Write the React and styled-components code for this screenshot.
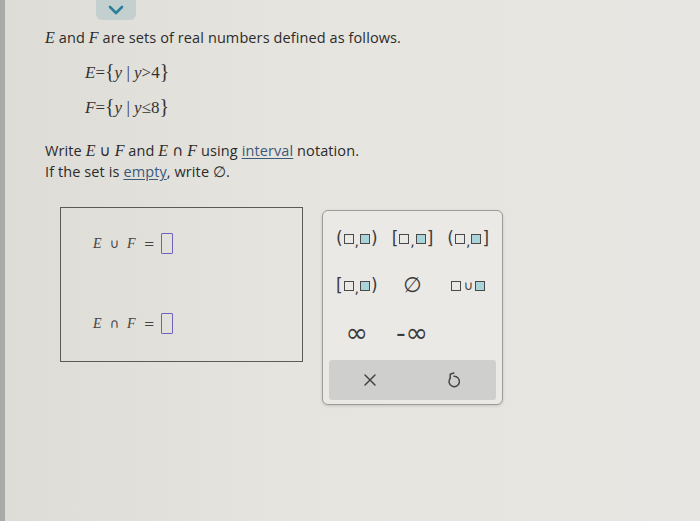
import React from 'react';
import styled, { createGlobalStyle } from 'styled-components';

const GlobalStyle = createGlobalStyle`
  html, body {
    margin: 0;
    padding: 0;
    background: #e3e1dc;
  }
  body {
    font-family: 'Open Sans', 'Liberation Sans', sans-serif;
    color: #2b2b2b;
  }
`;

const Page = styled.div`
  width: 700px;
  height: 521px;
  box-sizing: border-box;
  border-left: 5px solid #a9aba8;
  padding-left: 40px;
  background: linear-gradient(90deg, #dedcd6 0%, #e6e4df 40%, #e8e6e2 100%);
  overflow: hidden;
`;

const Tab = styled.div`
  margin-left: 51px;
  width: 40px;
  height: 20px;
  background: #c4cfcf;
  border-radius: 0 0 6px 6px;
  display: flex;
  align-items: center;
  justify-content: center;
`;

const Para = styled.p`
  margin: ${(p) => p.$mt || 0}px 0 0;
  font-size: 14.5px;
  line-height: 20px;
  height: 20px;
  letter-spacing: 0.1px;
`;

const Var = styled.span`
  font-family: 'Liberation Serif', serif;
  font-style: italic;
  font-size: 16px;
`;

const Op = styled.span`
  font-family: 'DejaVu Sans', sans-serif;
  font-size: 15px;
  margin: 0 4px;
`;

const Eq = styled.div`
  margin: ${(p) => p.$mt}px 0 0 40px;
  font-family: 'Liberation Serif', serif;
  font-size: 17px;
  line-height: 22px;
  height: 22px;
  color: #333;
`;

const Brace = styled.span`
  font-size: 20px;
  line-height: 1;
`;

const Link = styled.span`
  color: #3b5a7a;
  text-decoration: underline;
  text-underline-offset: 2px;
`;

const Row = styled.div`
  display: flex;
  align-items: flex-start;
  margin: 25px 0 0 15px;
`;

const AnswerBox = styled.div`
  width: 243px;
  height: 155px;
  box-sizing: border-box;
  border: 1.5px solid #5a5a58;
  padding: 25px 0 0 32px;
  display: flex;
  flex-direction: column;
  gap: 59px;
`;

const AnswerLine = styled.div`
  display: flex;
  align-items: center;
  font-family: 'Liberation Serif', serif;
  font-size: 14px;
  color: #444;
`;

const Sym = styled.span`
  font-family: ${(p) => (p.$it ? "'Liberation Serif', serif" : "'DejaVu Sans', sans-serif")};
  font-style: ${(p) => (p.$it ? 'italic' : 'normal')};
  font-size: ${(p) => (p.$it ? 14 : 13)}px;
  margin-left: ${(p) => p.$ml || 0}px;
`;

const Slot = styled.span`
  display: inline-block;
  width: 10px;
  height: 19px;
  border: 1.5px solid #6e63b8;
  border-radius: 1px;
  margin-left: 6px;
`;

const Panel = styled.div`
  margin: 3px 0 0 19px;
  width: 181px;
  height: 195px;
  box-sizing: border-box;
  border: 1.5px solid #9c9c9a;
  border-radius: 6px;
  background: #eae9e6;
  box-shadow: 0 1px 3px rgba(0, 0, 0, 0.15);
  padding: 4px 6px 0;
  display: flex;
  flex-direction: column;
`;

const Grid = styled.div`
  display: grid;
  grid-template-columns: repeat(3, 1fr);
  grid-auto-rows: 47px;
  align-items: center;
  justify-items: center;
  height: 141px;
`;

const Key = styled.div`
  font-family: 'DejaVu Sans', sans-serif;
  font-size: ${(p) => p.$size || 17}px;
  color: #3d3d3d;
  display: flex;
  align-items: center;
  line-height: 1;
  margin-left: ${(p) => p.$shift || 0}px;
`;

const Sq = styled.span`
  display: inline-block;
  width: 8px;
  height: 8px;
  border: 1.4px solid #4a4a4a;
  background: ${(p) => (p.$fill ? '#a8d4da' : 'transparent')};
  margin: 0 1px;
`;

const Comma = styled.span`
  font-size: 14px;
  margin: 4px 0 0;
`;

const Small = styled.span`
  font-size: 13px;
  margin: 0 1px;
`;

const Bar = styled.div`
  margin-top: 4px;
  height: 40px;
  background: #cfcfcd;
  border-radius: 3px;
  display: flex;
  align-items: center;
  justify-content: space-between;
  padding: 0 34px;
`;

const interval = (l, r) => (
  <Key>
    {l}
    <Sq />
    <Comma>,</Comma>
    <Sq $fill />
    {r}
  </Key>
);

const answer = (op) => (
  <AnswerLine>
    <Sym $it>E</Sym>
    <Sym $ml={8}>{op}</Sym>
    <Sym $it $ml={8}>F</Sym>
    <Sym $ml={8}>=</Sym>
    <Slot />
  </AnswerLine>
);

export default function App() {
  return (
    <Page>
      <GlobalStyle />
      <Tab>
        <svg width="16" height="10" viewBox="0 0 16 10">
          <path d="M2 2 L8 8 L14 2" fill="none" stroke="#2a8197" strokeWidth="2.6" strokeLinecap="round" strokeLinejoin="round" />
        </svg>
      </Tab>
      <Para $mt={8}>
        <Var>E</Var> and <Var>F</Var> are sets of real numbers defined as follows.
      </Para>
      <Eq $mt={13}>
        <i>E</i>=<Brace>{'{'}</Brace><i>y</i> | <i>y</i>&gt;4<Brace>{'}'}</Brace>
      </Eq>
      <Eq $mt={13}>
        <i>F</i>=<Brace>{'{'}</Brace><i>y</i> | <i>y</i>≤8<Brace>{'}'}</Brace>
      </Eq>
      <Para $mt={23}>
        Write <Var>E</Var>
        <Op>∪</Op>
        <Var>F</Var> and <Var>E</Var>
        <Op>∩</Op>
        <Var>F</Var> using <Link>interval</Link> notation.
      </Para>
      <Para $mt={1}>
        If the set is <Link>empty</Link>, write ∅.
      </Para>
      <Row>
        <AnswerBox>
          {answer('∪')}
          {answer('∩')}
        </AnswerBox>
        <Panel>
          <Grid>
            {interval('(', ')')}
            {interval('[', ']')}
            {interval('(', ']')}
            {interval('[', ')')}
            <Key $size={21}>∅</Key>
            <Key>
              <Sq />
              <Small>∪</Small>
              <Sq $fill />
            </Key>
            <Key $size={27}>∞</Key>
            <Key $size={27} $shift={-1}>-∞</Key>
            <span />
          </Grid>
          <Bar>
            <svg width="14" height="14" viewBox="0 0 14 14">
              <path d="M2 2 L12 12 M12 2 L2 12" stroke="#444" strokeWidth="1.5" strokeLinecap="round" />
            </svg>
            <svg width="16" height="18" viewBox="0 0 16 18">
              <path d="M4.2 7.2 A5.2 5.2 0 1 0 8 5.3" fill="none" stroke="#444" strokeWidth="1.5" strokeLinecap="round" />
              <path d="M7.8 2 L4.2 3.2 L4.2 7.2" fill="none" stroke="#444" strokeWidth="1.5" strokeLinecap="round" strokeLinejoin="round" />
            </svg>
          </Bar>
        </Panel>
      </Row>
    </Page>
  );
}
